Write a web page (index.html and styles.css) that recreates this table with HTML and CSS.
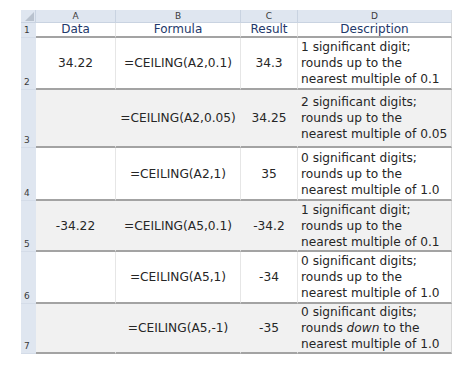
FILE: index.html
```html
<!DOCTYPE html>
<html>
<head>
<meta charset="utf-8">
<link rel="stylesheet" href="styles.css">
</head>
<body>
<div class="sheet">
  <div class="corner"><span class="tri"></span></div>
  <div class="colh">A</div>
  <div class="colh">B</div>
  <div class="colh">C</div>
  <div class="colh last">D</div>

  <div class="rowh">1</div>
  <div class="cell head">Data</div>
  <div class="cell head">Formula</div>
  <div class="cell head">Result</div>
  <div class="cell head last">Description</div>

  <div class="rowh">2</div>
  <div class="cell">34.22</div>
  <div class="cell">=CEILING(A2,0.1)</div>
  <div class="cell">34.3</div>
  <div class="cell desc last"><div>1 significant digit;<br>rounds up to the<br>nearest multiple of 0.1</div></div>

  <div class="rowh">3</div>
  <div class="cell alt"></div>
  <div class="cell alt">=CEILING(A2,0.05)</div>
  <div class="cell alt">34.25</div>
  <div class="cell alt desc last"><div>2 significant digits;<br>rounds up to the<br>nearest multiple of 0.05</div></div>

  <div class="rowh">4</div>
  <div class="cell"></div>
  <div class="cell">=CEILING(A2,1)</div>
  <div class="cell">35</div>
  <div class="cell desc last"><div>0 significant digits;<br>rounds up to the<br>nearest multiple of 1.0</div></div>

  <div class="rowh">5</div>
  <div class="cell alt">-34.22</div>
  <div class="cell alt">=CEILING(A5,0.1)</div>
  <div class="cell alt">-34.2</div>
  <div class="cell alt desc last"><div>1 significant digit;<br>rounds up to the<br>nearest multiple of 0.1</div></div>

  <div class="rowh">6</div>
  <div class="cell"></div>
  <div class="cell">=CEILING(A5,1)</div>
  <div class="cell">-34</div>
  <div class="cell desc last"><div>0 significant digits;<br>rounds up to the<br>nearest multiple of 1.0</div></div>

  <div class="rowh">7</div>
  <div class="cell alt"></div>
  <div class="cell alt">=CEILING(A5,-1)</div>
  <div class="cell alt">-35</div>
  <div class="cell alt desc last"><div>0 significant digits;<br>rounds <em>down</em> to the<br>nearest multiple of 1.0</div></div>
</div>
</body>
</html>
```
FILE: styles.css
```css
html, body {
  margin: 0;
  padding: 0;
  background: #ffffff;
}
body {
  padding: 10px 0 0 21px;
  font-family: "DejaVu Sans", Verdana, sans-serif;
  font-size: 12.2px;
  color: #262626;
}
.sheet {
  display: grid;
  grid-template-columns: 15px 80px 125px 57px 154px;
  grid-template-rows: 13px 15px 52px 58px 53px 51px 52px 50px;
  width: 431px;
}
.corner {
  background: #dfe6f0;
  border-right: 1px solid #c9d3e1;
  border-bottom: 1px solid #c9d3e1;
  position: relative;
  box-sizing: border-box;
}
.tri {
  position: absolute;
  right: 1px;
  bottom: 1px;
  width: 0;
  height: 0;
  border-left: 9px solid transparent;
  border-bottom: 9px solid #b9c2ce;
}
.colh {
  background: #dfe6f0;
  border-right: 1px solid #c9d3e1;
  border-bottom: 1px solid #c9d3e1;
  box-sizing: border-box;
  display: flex;
  align-items: center;
  justify-content: center;
  font-size: 9px;
  color: #3a3a3a;
  line-height: 1;
}
.colh.last {
  border-right: 1px solid #d8dde4;
}
.rowh {
  background: #dfe6f0;
  border-bottom: 1px solid #d4dce8;
  box-sizing: border-box;
  display: flex;
  align-items: flex-end;
  padding: 0 0 2px 3px;
  font-size: 9px;
  color: #3a3a3a;
  line-height: 1;
}
.cell {
  box-sizing: border-box;
  border-bottom: 2px solid #a3a3a3;
  border-right: 1px solid #e6e6e6;
  display: flex;
  align-items: center;
  justify-content: center;
  text-align: center;
  line-height: 16px;
  white-space: nowrap;
  background: #ffffff;
}
.cell.alt {
  background: #f1f1f1;
  border-right-color: #f1f1f1;
}
.cell.last {
  border-right: 1px solid #d8d8d8;
}
.cell.head {
  font-size: 12px;
  color: #23396b;
  line-height: 13px;
}
.cell.desc {
  justify-content: flex-start;
  text-align: left;
  padding-left: 3px;
  line-height: 16px;
}
.cell.desc em {
  font-style: italic;
}
```
